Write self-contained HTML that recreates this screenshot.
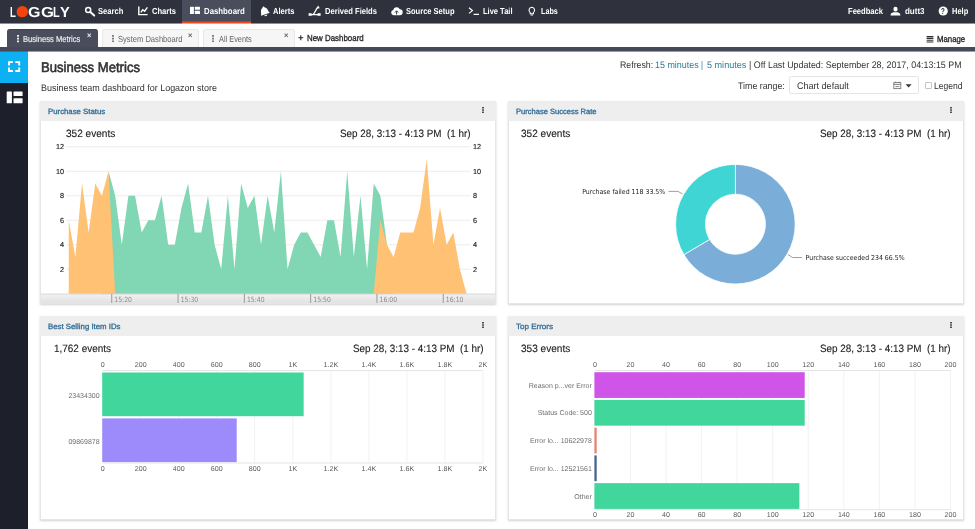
<!DOCTYPE html>
<html lang="en">
<head>
<meta charset="utf-8">
<title>Loggly - Business Metrics Dashboard</title>
<style>
*{box-sizing:border-box;margin:0;padding:0}
html,body{width:975px;height:529px;overflow:hidden;background:#fff}
body{position:relative;font-family:"Liberation Sans","DejaVu Sans",sans-serif;color:#333}
.abs{position:absolute}
#nav{position:absolute;left:0;top:0;width:975px;height:24px;background:linear-gradient(to bottom,#2f323d 0,#2f323d 23px,#8e9096 23px,#8e9096 24px)}
#nav .active{position:absolute;left:182px;top:0;width:69px;height:24px;background:#4a4e5c}
#nav .active i{position:absolute;left:0;bottom:0;width:100%;height:3px;background:linear-gradient(to bottom,#9c4c3d 0,#9c4c3d 1px,#ee4a1e 1px,#ee4a1e 2px,#f6a08a 2px,#f6a08a 3px)}
#tabs{position:absolute;left:0;top:24px;width:975px;height:28px;z-index:2}
#tabs .bar{position:absolute;left:0;top:23px;width:975px;height:5px;z-index:3;background:linear-gradient(to bottom,#464a58 0,#464a58 4px,rgba(70,74,88,.55) 4px,rgba(70,74,88,.55) 5px)}
.tab{position:absolute;top:5px;height:19px;border-radius:3px 3px 0 0}
.tab.on{background:#4a4e5c;border-top:1px solid #3d404d}
.tab.off{top:5px;background:#f6f6f6;border:1px solid #e8e8e8;border-bottom:none;height:18px}
#side{position:absolute;left:0;top:51px;width:28px;height:478px;background:#1d1f2b}
#side .blue{position:absolute;left:0;top:0;width:28px;height:32px;background:#0eb0f4}
.panel{position:absolute;width:456px;background:#fff;border:1px solid #e6e6e6;box-shadow:0 1px 2px rgba(0,0,0,.18)}
.panel .hd{position:absolute;left:-1px;top:-1px;right:-1px;height:20px;background:#eeeeee}
#app{position:absolute;left:0;top:0;width:975px;height:529px;will-change:transform;text-rendering:geometricPrecision}
svg{position:absolute;left:0;top:0;overflow:visible}
svg text{font-family:"DejaVu Sans","Liberation Sans",sans-serif}
</style>
</head>
<body>
<div id="app">

<div id="nav">
<div class="active"><i></i></div>
<svg width="975" height="24" viewBox="0 0 975 24">
<circle cx="22.4" cy="11.5" r="5.5" fill="#f4440f"/>
<g fill="none" stroke="#fff"><circle cx="88.2" cy="10" r="2.5" stroke-width="1.5"/><path d="M90.3 12.1 L94.2 15.6" stroke-width="2" stroke-linecap="round"/></g>
<path d="M138.8 6.6 V14.6 H147.6 M140.8 12.4 L142.8 9.8 L144.6 11.2 L147.4 7.4" fill="none" stroke="#fff" stroke-width="1.4"/>
<g fill="#fff"><rect x="190" y="6.8" width="3.9" height="7.3" rx=".5"/><rect x="194.8" y="6.8" width="5.2" height="3" rx=".5"/><rect x="194.8" y="10.8" width="5.2" height="3.3" rx=".5"/></g>
<g transform="rotate(-18 264.4 11) translate(264.4 11) scale(1.12) translate(-264.4 -11)"><path d="M260.2 14 C261.4 12.8 260.6 9 263.6 8 C264 6.6 265.4 6.7 265.6 8.1 C268.2 9.2 267.2 12.4 268.6 14 Z M263 14.8 H265.8 C265.6 16.2 263.2 16.2 263 14.8 Z" fill="#fff"/></g>
<g fill="#fff"><rect x="308.6" y="13.2" width="3" height="2.6"/><rect x="317.6" y="13.2" width="3" height="2.6"/><path d="M316.2 8.6 L318.2 5.4 L319.8 8.2 Z"/><path d="M311 14.6 H318 M313 14.2 C315.4 13.4 315.2 9.6 317.8 7.4" fill="none" stroke="#fff" stroke-width="1.3"/></g>
<path d="M393.6 15.2 A2.7 2.7 0 0 1 393.2 9.9 A3.5 3.5 0 0 1 399.8 9.2 A3 3 0 0 1 399.6 15.2 Z" fill="#fff"/><path d="M396.6 14.4 V11.2 M395 12.4 L396.6 10.8 L398.2 12.4" fill="none" stroke="#2e313c" stroke-width="1"/>
<path d="M469 7.8 L472.4 10.6 L469 13.4 M473.6 14.4 H479" fill="none" stroke="#fff" stroke-width="1.2"/>
<path d="M531.8 7.2 A3 3 0 0 1 533.4 12.6 V13.8 H530.2 V12.6 A3 3 0 0 1 531.8 7.2 Z" fill="none" stroke="#fff" stroke-width="1.1"/><path d="M530.6 15 H533" stroke="#fff" stroke-width="1"/>
<path d="M895.5 6.8 A2.1 2.4 0 0 1 895.5 11.6 A2.1 2.4 0 0 1 895.5 6.8 Z M890.6 15.6 C890.6 12.4 893 12.2 895.5 12.2 C898 12.2 900.4 12.4 900.4 15.6 Z" fill="#fff"/>
<circle cx="943.2" cy="11" r="4.6" fill="#fff"/>
</svg>
<span style="position:absolute;white-space:pre;line-height:1;font-size:14.4px;font-weight:700;color:#fff;font-family:'Liberation Sans','DejaVu Sans',sans-serif;left:9.76px;top:6.00px;transform-origin:0 0;transform:translateY(0.30px) scaleX(0.6630);">L</span>
<span style="position:absolute;white-space:pre;line-height:1;font-size:14.4px;font-weight:700;color:#f4440f;font-family:'Liberation Sans','DejaVu Sans',sans-serif;left:16.36px;top:6.00px;transform-origin:0 0;transform:translateY(0.30px) scaleX(1.0891);">O</span>
<span style="position:absolute;white-space:pre;line-height:1;font-size:14.4px;font-weight:700;color:#fff;font-family:'Liberation Sans','DejaVu Sans',sans-serif;left:28.34px;top:6.00px;transform-origin:0 0;transform:translateY(0.30px) scaleX(1.1112);">G</span>
<span style="position:absolute;white-space:pre;line-height:1;font-size:14.4px;font-weight:700;color:#fff;font-family:'Liberation Sans','DejaVu Sans',sans-serif;left:40.72px;top:6.00px;transform-origin:0 0;transform:translateY(0.30px) scaleX(1.1523);">G</span>
<span style="position:absolute;white-space:pre;line-height:1;font-size:14.4px;font-weight:700;color:#fff;font-family:'Liberation Sans','DejaVu Sans',sans-serif;left:53.17px;top:6.00px;transform-origin:0 0;transform:translateY(0.30px) scaleX(0.7577);">L</span>
<span style="position:absolute;white-space:pre;line-height:1;font-size:14.4px;font-weight:700;color:#fff;font-family:'Liberation Sans','DejaVu Sans',sans-serif;left:59.65px;top:6.00px;transform-origin:0 0;transform:translateY(0.30px) scaleX(1.0185);">Y</span>
<span style="position:absolute;white-space:pre;line-height:1;font-size:8.7px;font-weight:700;color:#fff;font-family:'Liberation Sans','DejaVu Sans',sans-serif;left:98.30px;top:7.00px;transform-origin:0 0;transform:translateY(0.10px) scaleX(0.8763);">Search</span>
<span style="position:absolute;white-space:pre;line-height:1;font-size:8.7px;font-weight:700;color:#fff;font-family:'Liberation Sans','DejaVu Sans',sans-serif;left:151.80px;top:7.00px;transform-origin:0 0;transform:translateY(0.10px) scaleX(0.8717);">Charts</span>
<span style="position:absolute;white-space:pre;line-height:1;font-size:8.7px;font-weight:700;color:#fff;font-family:'Liberation Sans','DejaVu Sans',sans-serif;left:204.00px;top:7.00px;transform-origin:0 0;transform:translateY(0.10px) scaleX(0.8989);">Dashboard</span>
<span style="position:absolute;white-space:pre;line-height:1;font-size:8.7px;font-weight:700;color:#fff;font-family:'Liberation Sans','DejaVu Sans',sans-serif;left:272.70px;top:7.00px;transform-origin:0 0;transform:translateY(0.10px) scaleX(0.8690);">Alerts</span>
<span style="position:absolute;white-space:pre;line-height:1;font-size:8.7px;font-weight:700;color:#fff;font-family:'Liberation Sans','DejaVu Sans',sans-serif;left:324.50px;top:7.00px;transform-origin:0 0;transform:translateY(0.10px) scaleX(0.8756);">Derived Fields</span>
<span style="position:absolute;white-space:pre;line-height:1;font-size:8.7px;font-weight:700;color:#fff;font-family:'Liberation Sans','DejaVu Sans',sans-serif;left:406.00px;top:7.00px;transform-origin:0 0;transform:translateY(0.10px) scaleX(0.8661);">Source Setup</span>
<span style="position:absolute;white-space:pre;line-height:1;font-size:8.7px;font-weight:700;color:#fff;font-family:'Liberation Sans','DejaVu Sans',sans-serif;left:482.70px;top:7.00px;transform-origin:0 0;transform:translateY(0.10px) scaleX(0.8645);">Live Tail</span>
<span style="position:absolute;white-space:pre;line-height:1;font-size:8.7px;font-weight:700;color:#fff;font-family:'Liberation Sans','DejaVu Sans',sans-serif;left:540.50px;top:7.00px;transform-origin:0 0;transform:translateY(0.10px) scaleX(0.8284);">Labs</span>
<span style="position:absolute;white-space:pre;line-height:1;font-size:8.7px;font-weight:700;color:#fff;font-family:'Liberation Sans','DejaVu Sans',sans-serif;left:847.70px;top:7.00px;transform-origin:0 0;transform:translateY(0.10px) scaleX(0.8733);">Feedback</span>
<span style="position:absolute;white-space:pre;line-height:1;font-size:8.7px;font-weight:700;color:#fff;font-family:'Liberation Sans','DejaVu Sans',sans-serif;left:904.70px;top:7.00px;transform-origin:0 0;transform:translateY(0.10px) scaleX(0.9183);">dutt3</span>
<span style="position:absolute;white-space:pre;line-height:1;font-size:8.5px;font-weight:700;color:#2e313c;font-family:'Liberation Sans','DejaVu Sans',sans-serif;left:941.40px;top:7.00px;transform-origin:0 0;transform:translateY(0.40px) scaleX(0.7303);">?</span>
<span style="position:absolute;white-space:pre;line-height:1;font-size:8.7px;font-weight:700;color:#fff;font-family:'Liberation Sans','DejaVu Sans',sans-serif;left:952.20px;top:7.00px;transform-origin:0 0;transform:translateY(0.10px) scaleX(0.8657);">Help</span>
</div>
<div id="tabs">
<div class="bar"></div>
<div class="tab on" style="left:7px;width:91px"></div>
<div class="tab off" style="left:102px;width:97px"></div>
<div class="tab off" style="left:203px;width:92px"></div>
<svg style="left:15.80px;top:11.00px" width="4" height="7.70"><path d="M2 0 V7.20" stroke="#fff" stroke-width="1.80" stroke-dasharray="1.80 0.90" fill="none"/></svg>
<span style="position:absolute;white-space:pre;line-height:1;font-size:8.8px;font-weight:400;color:#f2f2f2;font-family:'Liberation Sans','DejaVu Sans',sans-serif;left:22.60px;top:11.00px;transform-origin:0 0;transform:translateY(0.20px) scaleX(0.8634);-webkit-text-stroke:0.15px #f2f2f2;">Business Metrics</span>
<span style="position:absolute;white-space:pre;line-height:1;font-size:8px;font-weight:700;color:#f0f0f0;font-family:'Liberation Sans','DejaVu Sans',sans-serif;left:87.30px;top:7.00px;transform-origin:0 0;transform:translateY(0.90px) scaleX(0.9418);">×</span>
<svg style="left:110.90px;top:11.05px" width="4" height="7.60"><path d="M2 0 V7.10" stroke="#666" stroke-width="1.70" stroke-dasharray="1.70 1.00" fill="none"/></svg>
<span style="position:absolute;white-space:pre;line-height:1;font-size:8.8px;font-weight:400;color:#666;font-family:'Liberation Sans','DejaVu Sans',sans-serif;left:118.00px;top:11.00px;transform-origin:0 0;transform:translateY(0.20px) scaleX(0.8622);">System Dashboard</span>
<span style="position:absolute;white-space:pre;line-height:1;font-size:8px;font-weight:700;color:#666;font-family:'Liberation Sans','DejaVu Sans',sans-serif;left:188.20px;top:7.00px;transform-origin:0 0;transform:translateY(0.90px) scaleX(0.9418);">×</span>
<svg style="left:211.30px;top:11.05px" width="4" height="7.60"><path d="M2 0 V7.10" stroke="#666" stroke-width="1.70" stroke-dasharray="1.70 1.00" fill="none"/></svg>
<span style="position:absolute;white-space:pre;line-height:1;font-size:8.8px;font-weight:400;color:#666;font-family:'Liberation Sans','DejaVu Sans',sans-serif;left:218.70px;top:11.00px;transform-origin:0 0;transform:translateY(0.20px) scaleX(0.8383);">All Events</span>
<span style="position:absolute;white-space:pre;line-height:1;font-size:8px;font-weight:700;color:#666;font-family:'Liberation Sans','DejaVu Sans',sans-serif;left:284.00px;top:7.00px;transform-origin:0 0;transform:translateY(0.90px) scaleX(0.9418);">×</span>
<span style="position:absolute;white-space:pre;line-height:1;font-size:10px;font-weight:700;color:#222;font-family:'Liberation Sans','DejaVu Sans',sans-serif;left:298.20px;top:10.00px;transform-origin:0 0;transform:translateY(0.40px) scaleX(0.9583);">+</span>
<span style="position:absolute;white-space:pre;line-height:1;font-size:8.8px;font-weight:400;color:#222;font-family:'Liberation Sans','DejaVu Sans',sans-serif;left:306.80px;top:10.00px;transform-origin:0 0;transform:translateY(0.40px) scaleX(0.8989);-webkit-text-stroke:0.3px #222;">New Dashboard</span>
<svg width="975" height="28" viewBox="0 24 975 28"><path d="M926.6 36.6 H933.4 M926.6 38.4 H933.4 M926.6 40.2 H933.4 M926.6 42 H933.4" stroke="#333" stroke-width="1.1"/></svg>
<span style="position:absolute;white-space:pre;line-height:1;font-size:8.8px;font-weight:400;color:#222;font-family:'Liberation Sans','DejaVu Sans',sans-serif;left:936.50px;top:11.00px;transform-origin:0 0;transform:translateY(0.10px) scaleX(0.8869);-webkit-text-stroke:0.3px #222;">Manage</span>
</div>
<div id="side"><div class="blue"></div>
<svg width="28" height="60" viewBox="0 51 28 60">
<path d="M9 65.6 V62.1 H12.9 M15.3 62.1 H19.2 V65.6 M19.2 67.6 V71 H15.3 M12.9 71 H9 V67.6" fill="none" stroke="#fff" stroke-width="1.9"/>
<g fill="#fff"><rect x="6.7" y="91.4" width="5.2" height="11.9" rx=".6"/><rect x="13.5" y="91.4" width="9.1" height="4.6" rx=".6"/><rect x="13.5" y="98.2" width="9.1" height="5.1" rx=".6"/></g>
</svg></div>
<div id="head">
<span style="position:absolute;white-space:pre;line-height:1;font-size:14px;font-weight:400;color:#333;font-family:'Liberation Sans','DejaVu Sans',sans-serif;left:41.20px;top:60.00px;transform-origin:0 0;transform:scaleX(0.9356);-webkit-text-stroke:0.6px #333;">Business Metrics</span>
<span style="position:absolute;white-space:pre;line-height:1;font-size:9.5px;font-weight:400;color:#333;font-family:'Liberation Sans','DejaVu Sans',sans-serif;left:41.20px;top:84.00px;transform-origin:0 0;transform:translateY(0.20px) scaleX(0.9441);">Business team dashboard for Logazon store</span>
<span style="position:absolute;white-space:pre;line-height:1;font-size:9.5px;font-weight:400;color:#333;font-family:'Liberation Sans','DejaVu Sans',sans-serif;left:620.10px;top:60.00px;transform-origin:0 0;transform:translateY(0.60px) scaleX(0.9246);">Refresh:</span>
<span style="position:absolute;white-space:pre;line-height:1;font-size:9.5px;font-weight:400;color:#2f7b96;font-family:'Liberation Sans','DejaVu Sans',sans-serif;left:655.00px;top:60.00px;transform-origin:0 0;transform:translateY(0.60px) scaleX(0.9401);">15 minutes</span>
<span style="position:absolute;white-space:pre;line-height:1;font-size:9.5px;font-weight:400;color:#2f7b96;font-family:'Liberation Sans','DejaVu Sans',sans-serif;left:701.40px;top:60.00px;transform-origin:0 0;transform:translateY(0.60px) scaleX(0.8101);">|</span>
<span style="position:absolute;white-space:pre;line-height:1;font-size:9.5px;font-weight:400;color:#2f7b96;font-family:'Liberation Sans','DejaVu Sans',sans-serif;left:706.60px;top:60.00px;transform-origin:0 0;transform:translateY(0.60px) scaleX(0.9542);">5 minutes</span>
<span style="position:absolute;white-space:pre;line-height:1;font-size:9.5px;font-weight:400;color:#333;font-family:'Liberation Sans','DejaVu Sans',sans-serif;left:748.60px;top:60.00px;transform-origin:0 0;transform:translateY(0.60px) scaleX(0.9354);">| Off Last Updated: September 28, 2017, 04:13:15 PM</span>
<span style="position:absolute;white-space:pre;line-height:1;font-size:9.5px;font-weight:400;color:#333;font-family:'Liberation Sans','DejaVu Sans',sans-serif;left:738.40px;top:81.00px;transform-origin:0 0;transform:translateY(0.60px) scaleX(0.9296);">Time range:</span>
<div class="abs" style="left:789px;top:76px;width:129.5px;height:18px;border:1px solid #e4e4e4;border-radius:2px;background:#fff"></div>
<span style="position:absolute;white-space:pre;line-height:1;font-size:9.5px;font-weight:400;color:#333;font-family:'Liberation Sans','DejaVu Sans',sans-serif;left:797.20px;top:81.00px;transform-origin:0 0;transform:translateY(0.60px) scaleX(0.9503);">Chart default</span>
<svg width="975" height="100" viewBox="0 0 975 100"><g><rect x="893.8" y="82.6" width="7" height="6" fill="none" stroke="#777" stroke-width=".9"/><path d="M893.8 84.4 H900.8 M895.6 81.6 V83 M899 81.6 V83 M895.4 86.6 H899.4" stroke="#777" stroke-width=".9" fill="none"/><path d="M905.6 84.2 H911.6 L908.6 87.6 Z" fill="#333"/></g></svg>
<div class="abs" style="left:925.2px;top:82.4px;width:6.4px;height:6.4px;border:1px solid #c4c4c4;border-radius:1px;background:#fff"></div>
<span style="position:absolute;white-space:pre;line-height:1;font-size:9.5px;font-weight:400;color:#333;font-family:'Liberation Sans','DejaVu Sans',sans-serif;left:934.20px;top:81.00px;transform-origin:0 0;transform:translateY(0.60px) scaleX(0.8990);">Legend</span>
</div>
<div id="grid">
<div class="panel" id="p1" style="left:40px;top:101px;height:203px">
<div class="hd"></div>
<svg width="456" height="203" viewBox="0 0 456 203">
<path d="M25.30 167.25 H429.70" stroke="#ececec" stroke-width="1"/>
<path d="M25.30 142.75 H429.70" stroke="#ececec" stroke-width="1"/>
<path d="M25.30 118.25 H429.70" stroke="#ececec" stroke-width="1"/>
<path d="M25.30 93.75 H429.70" stroke="#ececec" stroke-width="1"/>
<path d="M25.30 69.25 H429.70" stroke="#ececec" stroke-width="1"/>
<path d="M25.30 44.75 H429.70" stroke="#ececec" stroke-width="1"/>
<defs><linearGradient id="ag" x1="0" y1="0" x2="0" y2="1"><stop offset="0" stop-color="#f1f1f1"/><stop offset="1" stop-color="#e2e2e2"/></linearGradient></defs>
<rect x="0" y="192" width="454" height="9.2" fill="url(#ag)"/>
<path d="M0 192 H454" stroke="#d8d8d8" stroke-width="1"/>
<path d="M60.90 191.75 L60.90 191.75 L67.53 69.25 L74.16 93.75 L80.79 142.75 L87.42 93.75 L94.05 93.75 L100.68 130.50 L107.31 118.25 L113.94 118.25 L120.57 93.75 L127.20 142.75 L133.83 142.75 L140.46 106.00 L147.09 81.50 L153.72 130.50 L160.35 130.50 L166.98 93.75 L173.61 142.75 L180.24 167.25 L186.87 93.75 L193.50 167.25 L200.13 81.50 L206.76 106.00 L213.39 93.75 L220.02 142.75 L226.65 93.75 L233.28 130.50 L239.91 69.25 L246.54 167.25 L253.17 142.75 L259.80 130.50 L266.43 130.50 L273.06 142.75 L279.69 155.00 L286.32 118.25 L292.95 118.25 L299.58 155.00 L306.21 69.25 L312.84 155.00 L319.47 93.75 L326.10 167.25 L332.73 81.50 L339.36 93.75 L345.99 142.75 L352.62 191.75 L352.62 191.75 Z" fill="#81d6b3"/>
<path d="M27.75 191.75 L27.75 118.25 L34.38 155.00 L41.01 81.50 L47.64 130.50 L54.27 81.50 L60.90 93.75 L67.53 69.25 L74.16 191.75 Z" fill="#ffc174"/>
<path d="M332.73 191.75 L332.73 191.75 L339.36 118.25 L345.99 142.75 L352.62 155.00 L359.25 130.50 L365.88 130.50 L372.51 130.50 L379.14 106.00 L385.77 57.00 L392.40 142.75 L399.03 106.00 L405.66 142.75 L412.29 130.50 L418.92 167.25 L425.55 191.75 Z" fill="#ffc174"/>
<path d="M70.75 192 V201" stroke="#9a9a9a" stroke-width="1"/>
<text x="73.35" y="199.5" font-size="7.2" fill="#8a8a8a" textLength="17.6" lengthAdjust="spacingAndGlyphs">15:20</text>
<path d="M137.05 192 V201" stroke="#9a9a9a" stroke-width="1"/>
<text x="139.65" y="199.5" font-size="7.2" fill="#8a8a8a" textLength="17.6" lengthAdjust="spacingAndGlyphs">15:30</text>
<path d="M203.35 192 V201" stroke="#9a9a9a" stroke-width="1"/>
<text x="205.95" y="199.5" font-size="7.2" fill="#8a8a8a" textLength="17.6" lengthAdjust="spacingAndGlyphs">15:40</text>
<path d="M269.65 192 V201" stroke="#9a9a9a" stroke-width="1"/>
<text x="272.25" y="199.5" font-size="7.2" fill="#8a8a8a" textLength="17.6" lengthAdjust="spacingAndGlyphs">15:50</text>
<path d="M335.95 192 V201" stroke="#9a9a9a" stroke-width="1"/>
<text x="338.55" y="199.5" font-size="7.2" fill="#8a8a8a" textLength="17.6" lengthAdjust="spacingAndGlyphs">16:00</text>
<path d="M402.25 192 V201" stroke="#9a9a9a" stroke-width="1"/>
<text x="404.85" y="199.5" font-size="7.2" fill="#8a8a8a" textLength="17.6" lengthAdjust="spacingAndGlyphs">16:10</text>
<text x="23" y="169.85" font-size="7.3" fill="#222" stroke="#222" stroke-width=".15" text-anchor="end" style="font-family:'Liberation Sans',sans-serif">2</text>
<text x="431.9" y="169.85" font-size="7.3" fill="#222" stroke="#222" stroke-width=".15" style="font-family:'Liberation Sans',sans-serif">2</text>
<text x="23" y="145.35" font-size="7.3" fill="#222" stroke="#222" stroke-width=".15" text-anchor="end" style="font-family:'Liberation Sans',sans-serif">4</text>
<text x="431.9" y="145.35" font-size="7.3" fill="#222" stroke="#222" stroke-width=".15" style="font-family:'Liberation Sans',sans-serif">4</text>
<text x="23" y="120.85" font-size="7.3" fill="#222" stroke="#222" stroke-width=".15" text-anchor="end" style="font-family:'Liberation Sans',sans-serif">6</text>
<text x="431.9" y="120.85" font-size="7.3" fill="#222" stroke="#222" stroke-width=".15" style="font-family:'Liberation Sans',sans-serif">6</text>
<text x="23" y="96.35" font-size="7.3" fill="#222" stroke="#222" stroke-width=".15" text-anchor="end" style="font-family:'Liberation Sans',sans-serif">8</text>
<text x="431.9" y="96.35" font-size="7.3" fill="#222" stroke="#222" stroke-width=".15" style="font-family:'Liberation Sans',sans-serif">8</text>
<text x="23" y="71.85" font-size="7.3" fill="#222" stroke="#222" stroke-width=".15" text-anchor="end" style="font-family:'Liberation Sans',sans-serif">10</text>
<text x="431.9" y="71.85" font-size="7.3" fill="#222" stroke="#222" stroke-width=".15" style="font-family:'Liberation Sans',sans-serif">10</text>
<text x="23" y="47.35" font-size="7.3" fill="#222" stroke="#222" stroke-width=".15" text-anchor="end" style="font-family:'Liberation Sans',sans-serif">12</text>
<text x="431.9" y="47.35" font-size="7.3" fill="#222" stroke="#222" stroke-width=".15" style="font-family:'Liberation Sans',sans-serif">12</text>
</svg>
<span style="position:absolute;white-space:pre;line-height:1;font-size:7.7px;font-weight:400;color:#2f6b96;font-family:'Liberation Sans','DejaVu Sans',sans-serif;left:6.60px;top:5.00px;transform-origin:0 0;transform:translateY(0.60px) scaleX(1.0138);-webkit-text-stroke:0.3px #2f6b96;">Purchase Status</span>
<svg style="left:440.30px;top:5.30px" width="4" height="6.50"><path d="M2 0 V6.00" stroke="#2a2a2a" stroke-width="1.60" stroke-dasharray="1.60 0.60" fill="none"/></svg>
<span style="position:absolute;white-space:pre;line-height:1;font-size:10.6px;font-weight:400;color:#222;font-family:'Liberation Sans','DejaVu Sans',sans-serif;left:24.70px;top:26.00px;transform-origin:0 0;transform:translateY(0.50px) scaleX(0.9509);-webkit-text-stroke:0.12px #222;">352 events</span>
<span style="position:absolute;white-space:pre;line-height:1;font-size:10.6px;font-weight:400;color:#222;font-family:'Liberation Sans','DejaVu Sans',sans-serif;left:299.30px;top:26.00px;transform-origin:0 0;transform:translateY(0.60px) scaleX(0.9318);-webkit-text-stroke:0.12px #222;">Sep 28, 3:13 - 4:13 PM  (1 hr)</span>
</div>
<div class="panel" id="p2" style="left:508px;top:101px;height:203px">
<div class="hd"></div>
<svg width="456" height="203" viewBox="0 0 456 203">
<path d="M226.40 62.40 A59.8 59.8 0 1 1 174.93 152.64 L200.58 137.47 A30 30 0 1 0 226.40 92.20 Z" fill="#7aadd8" stroke="#fff" stroke-width="0.8"/>
<path d="M174.93 152.64 A59.8 59.8 0 0 1 226.40 62.40 L226.40 92.20 A30 30 0 0 0 200.58 137.47 Z" fill="#40d5d5" stroke="#fff" stroke-width="0.8"/>
<path d="M159.5 89.4 H169 L173.5 92" fill="none" stroke="#888" stroke-width=".8"/>
<path d="M279 152.5 L283.5 155.5 H293" fill="none" stroke="#888" stroke-width=".8"/>
<text x="73.20000000000005" y="92" font-size="6.8" fill="#222" textLength="83" lengthAdjust="spacingAndGlyphs">Purchase failed 118 33.5%</text>
<text x="296.6" y="158.10000000000002" font-size="6.8" fill="#222" textLength="99" lengthAdjust="spacingAndGlyphs">Purchase succeeded 234 66.5%</text>
</svg>
<span style="position:absolute;white-space:pre;line-height:1;font-size:7.7px;font-weight:400;color:#2f6b96;font-family:'Liberation Sans','DejaVu Sans',sans-serif;left:6.60px;top:5.00px;transform-origin:0 0;transform:translateY(0.60px) scaleX(0.9811);-webkit-text-stroke:0.3px #2f6b96;">Purchase Success Rate</span>
<svg style="left:440.30px;top:5.30px" width="4" height="6.50"><path d="M2 0 V6.00" stroke="#2a2a2a" stroke-width="1.60" stroke-dasharray="1.60 0.60" fill="none"/></svg>
<span style="position:absolute;white-space:pre;line-height:1;font-size:10.6px;font-weight:400;color:#222;font-family:'Liberation Sans','DejaVu Sans',sans-serif;left:12.00px;top:26.00px;transform-origin:0 0;transform:translateY(0.50px) scaleX(0.9509);-webkit-text-stroke:0.12px #222;">352 events</span>
<span style="position:absolute;white-space:pre;line-height:1;font-size:10.6px;font-weight:400;color:#222;font-family:'Liberation Sans','DejaVu Sans',sans-serif;left:311.40px;top:26.00px;transform-origin:0 0;transform:translateY(0.60px) scaleX(0.9318);-webkit-text-stroke:0.12px #222;">Sep 28, 3:13 - 4:13 PM  (1 hr)</span>
</div>
<div class="panel" id="p3" style="left:40px;top:316px;height:204px">
<div class="hd"></div>
<svg width="456" height="204" viewBox="0 0 456 204">
<path d="M99.72 53.60 V146.00" stroke="#f2f2f2" stroke-width="1"/>
<path d="M137.74 53.60 V146.00" stroke="#f2f2f2" stroke-width="1"/>
<path d="M175.76 53.60 V146.00" stroke="#f2f2f2" stroke-width="1"/>
<path d="M213.78 53.60 V146.00" stroke="#f2f2f2" stroke-width="1"/>
<path d="M251.80 53.60 V146.00" stroke="#f2f2f2" stroke-width="1"/>
<path d="M289.82 53.60 V146.00" stroke="#f2f2f2" stroke-width="1"/>
<path d="M327.84 53.60 V146.00" stroke="#f2f2f2" stroke-width="1"/>
<path d="M365.86 53.60 V146.00" stroke="#f2f2f2" stroke-width="1"/>
<path d="M403.88 53.60 V146.00" stroke="#f2f2f2" stroke-width="1"/>
<path d="M441.90 53.60 V146.00" stroke="#f2f2f2" stroke-width="1"/>
<path d="M61.70 53.60 H441.90 M61.70 146.00 H441.90" stroke="#e4e4e4" stroke-width="1" fill="none"/>
<rect x="61.20" y="55.50" width="201.44" height="43.70" fill="#41d69c"/>
<text x="58.60" y="80.75" font-size="7" fill="#6e6e6e" text-anchor="end" style="font-family:'Liberation Sans','DejaVu Sans',sans-serif">23434300</text>
<rect x="61.20" y="101.40" width="134.52" height="43.70" fill="#9d8bfb"/>
<text x="58.60" y="126.65" font-size="7" fill="#6e6e6e" text-anchor="end" style="font-family:'Liberation Sans','DejaVu Sans',sans-serif">09869878</text>
<text x="61.70" y="50.20" font-size="7.1" fill="#5a5a5a" text-anchor="middle" style="font-family:'Liberation Sans','DejaVu Sans',sans-serif">0</text>
<text x="61.70" y="153.70" font-size="7.1" fill="#5a5a5a" text-anchor="middle" style="font-family:'Liberation Sans','DejaVu Sans',sans-serif">0</text>
<text x="99.72" y="50.20" font-size="7.1" fill="#5a5a5a" text-anchor="middle" style="font-family:'Liberation Sans','DejaVu Sans',sans-serif">200</text>
<text x="99.72" y="153.70" font-size="7.1" fill="#5a5a5a" text-anchor="middle" style="font-family:'Liberation Sans','DejaVu Sans',sans-serif">200</text>
<text x="137.74" y="50.20" font-size="7.1" fill="#5a5a5a" text-anchor="middle" style="font-family:'Liberation Sans','DejaVu Sans',sans-serif">400</text>
<text x="137.74" y="153.70" font-size="7.1" fill="#5a5a5a" text-anchor="middle" style="font-family:'Liberation Sans','DejaVu Sans',sans-serif">400</text>
<text x="175.76" y="50.20" font-size="7.1" fill="#5a5a5a" text-anchor="middle" style="font-family:'Liberation Sans','DejaVu Sans',sans-serif">600</text>
<text x="175.76" y="153.70" font-size="7.1" fill="#5a5a5a" text-anchor="middle" style="font-family:'Liberation Sans','DejaVu Sans',sans-serif">600</text>
<text x="213.78" y="50.20" font-size="7.1" fill="#5a5a5a" text-anchor="middle" style="font-family:'Liberation Sans','DejaVu Sans',sans-serif">800</text>
<text x="213.78" y="153.70" font-size="7.1" fill="#5a5a5a" text-anchor="middle" style="font-family:'Liberation Sans','DejaVu Sans',sans-serif">800</text>
<text x="251.80" y="50.20" font-size="7.1" fill="#5a5a5a" text-anchor="middle" style="font-family:'Liberation Sans','DejaVu Sans',sans-serif">1K</text>
<text x="251.80" y="153.70" font-size="7.1" fill="#5a5a5a" text-anchor="middle" style="font-family:'Liberation Sans','DejaVu Sans',sans-serif">1K</text>
<text x="289.82" y="50.20" font-size="7.1" fill="#5a5a5a" text-anchor="middle" style="font-family:'Liberation Sans','DejaVu Sans',sans-serif">1.2K</text>
<text x="289.82" y="153.70" font-size="7.1" fill="#5a5a5a" text-anchor="middle" style="font-family:'Liberation Sans','DejaVu Sans',sans-serif">1.2K</text>
<text x="327.84" y="50.20" font-size="7.1" fill="#5a5a5a" text-anchor="middle" style="font-family:'Liberation Sans','DejaVu Sans',sans-serif">1.4K</text>
<text x="327.84" y="153.70" font-size="7.1" fill="#5a5a5a" text-anchor="middle" style="font-family:'Liberation Sans','DejaVu Sans',sans-serif">1.4K</text>
<text x="365.86" y="50.20" font-size="7.1" fill="#5a5a5a" text-anchor="middle" style="font-family:'Liberation Sans','DejaVu Sans',sans-serif">1.6K</text>
<text x="365.86" y="153.70" font-size="7.1" fill="#5a5a5a" text-anchor="middle" style="font-family:'Liberation Sans','DejaVu Sans',sans-serif">1.6K</text>
<text x="403.88" y="50.20" font-size="7.1" fill="#5a5a5a" text-anchor="middle" style="font-family:'Liberation Sans','DejaVu Sans',sans-serif">1.8K</text>
<text x="403.88" y="153.70" font-size="7.1" fill="#5a5a5a" text-anchor="middle" style="font-family:'Liberation Sans','DejaVu Sans',sans-serif">1.8K</text>
<text x="441.90" y="50.20" font-size="7.1" fill="#5a5a5a" text-anchor="middle" style="font-family:'Liberation Sans','DejaVu Sans',sans-serif">2K</text>
<text x="441.90" y="153.70" font-size="7.1" fill="#5a5a5a" text-anchor="middle" style="font-family:'Liberation Sans','DejaVu Sans',sans-serif">2K</text>
</svg>
<span style="position:absolute;white-space:pre;line-height:1;font-size:7.7px;font-weight:400;color:#2f6b96;font-family:'Liberation Sans','DejaVu Sans',sans-serif;left:6.60px;top:5.00px;transform-origin:0 0;transform:translateY(0.60px) scaleX(1.0160);-webkit-text-stroke:0.3px #2f6b96;">Best Selling Item IDs</span>
<svg style="left:440.30px;top:5.30px" width="4" height="6.50"><path d="M2 0 V6.00" stroke="#2a2a2a" stroke-width="1.60" stroke-dasharray="1.60 0.60" fill="none"/></svg>
<span style="position:absolute;white-space:pre;line-height:1;font-size:10.6px;font-weight:400;color:#222;font-family:'Liberation Sans','DejaVu Sans',sans-serif;left:12.70px;top:26.00px;transform-origin:0 0;transform:translateY(0.50px) scaleX(0.9395);-webkit-text-stroke:0.12px #222;">1,762 events</span>
<span style="position:absolute;white-space:pre;line-height:1;font-size:10.6px;font-weight:400;color:#222;font-family:'Liberation Sans','DejaVu Sans',sans-serif;left:311.70px;top:26.00px;transform-origin:0 0;transform:translateY(0.60px) scaleX(0.9318);-webkit-text-stroke:0.12px #222;">Sep 28, 3:13 - 4:13 PM  (1 hr)</span>
</div>
<div class="panel" id="p4" style="left:508px;top:316px;height:204px">
<div class="hd"></div>
<svg width="456" height="204" viewBox="0 0 456 204">
<path d="M121.46 53.50 V192.70" stroke="#f2f2f2" stroke-width="1"/>
<path d="M157.02 53.50 V192.70" stroke="#f2f2f2" stroke-width="1"/>
<path d="M192.58 53.50 V192.70" stroke="#f2f2f2" stroke-width="1"/>
<path d="M228.14 53.50 V192.70" stroke="#f2f2f2" stroke-width="1"/>
<path d="M263.70 53.50 V192.70" stroke="#f2f2f2" stroke-width="1"/>
<path d="M299.26 53.50 V192.70" stroke="#f2f2f2" stroke-width="1"/>
<path d="M334.82 53.50 V192.70" stroke="#f2f2f2" stroke-width="1"/>
<path d="M370.38 53.50 V192.70" stroke="#f2f2f2" stroke-width="1"/>
<path d="M405.94 53.50 V192.70" stroke="#f2f2f2" stroke-width="1"/>
<path d="M441.50 53.50 V192.70" stroke="#f2f2f2" stroke-width="1"/>
<path d="M85.90 53.50 H441.50 M85.90 192.70 H441.50" stroke="#e4e4e4" stroke-width="1" fill="none"/>
<rect x="85.40" y="55.20" width="210.30" height="25.74" fill="#cf55e8"/>
<text x="82.80" y="70.67" font-size="7" fill="#6e6e6e" text-anchor="end" style="font-family:'Liberation Sans','DejaVu Sans',sans-serif">Reason p...ver Error</text>
<rect x="85.40" y="82.94" width="210.30" height="25.74" fill="#41d69c"/>
<text x="82.80" y="98.41" font-size="7" fill="#6e6e6e" text-anchor="end" style="font-family:'Liberation Sans','DejaVu Sans',sans-serif">Status Code: 500</text>
<rect x="85.40" y="110.68" width="2.28" height="25.74" fill="#e28570"/>
<text x="82.80" y="126.15" font-size="7" fill="#6e6e6e" text-anchor="end" style="font-family:'Liberation Sans','DejaVu Sans',sans-serif">Error lo... 10622978</text>
<rect x="85.40" y="138.42" width="2.28" height="25.74" fill="#45638f"/>
<text x="82.80" y="153.89" font-size="7" fill="#6e6e6e" text-anchor="end" style="font-family:'Liberation Sans','DejaVu Sans',sans-serif">Error lo... 12521561</text>
<rect x="85.40" y="166.16" width="204.97" height="25.74" fill="#41d69c"/>
<text x="82.80" y="181.63" font-size="7" fill="#6e6e6e" text-anchor="end" style="font-family:'Liberation Sans','DejaVu Sans',sans-serif">Other</text>
<text x="85.90" y="50.10" font-size="7.1" fill="#5a5a5a" text-anchor="middle" style="font-family:'Liberation Sans','DejaVu Sans',sans-serif">0</text>
<text x="85.90" y="200.40" font-size="7.1" fill="#5a5a5a" text-anchor="middle" style="font-family:'Liberation Sans','DejaVu Sans',sans-serif">0</text>
<text x="121.46" y="50.10" font-size="7.1" fill="#5a5a5a" text-anchor="middle" style="font-family:'Liberation Sans','DejaVu Sans',sans-serif">20</text>
<text x="121.46" y="200.40" font-size="7.1" fill="#5a5a5a" text-anchor="middle" style="font-family:'Liberation Sans','DejaVu Sans',sans-serif">20</text>
<text x="157.02" y="50.10" font-size="7.1" fill="#5a5a5a" text-anchor="middle" style="font-family:'Liberation Sans','DejaVu Sans',sans-serif">40</text>
<text x="157.02" y="200.40" font-size="7.1" fill="#5a5a5a" text-anchor="middle" style="font-family:'Liberation Sans','DejaVu Sans',sans-serif">40</text>
<text x="192.58" y="50.10" font-size="7.1" fill="#5a5a5a" text-anchor="middle" style="font-family:'Liberation Sans','DejaVu Sans',sans-serif">60</text>
<text x="192.58" y="200.40" font-size="7.1" fill="#5a5a5a" text-anchor="middle" style="font-family:'Liberation Sans','DejaVu Sans',sans-serif">60</text>
<text x="228.14" y="50.10" font-size="7.1" fill="#5a5a5a" text-anchor="middle" style="font-family:'Liberation Sans','DejaVu Sans',sans-serif">80</text>
<text x="228.14" y="200.40" font-size="7.1" fill="#5a5a5a" text-anchor="middle" style="font-family:'Liberation Sans','DejaVu Sans',sans-serif">80</text>
<text x="263.70" y="50.10" font-size="7.1" fill="#5a5a5a" text-anchor="middle" style="font-family:'Liberation Sans','DejaVu Sans',sans-serif">100</text>
<text x="263.70" y="200.40" font-size="7.1" fill="#5a5a5a" text-anchor="middle" style="font-family:'Liberation Sans','DejaVu Sans',sans-serif">100</text>
<text x="299.26" y="50.10" font-size="7.1" fill="#5a5a5a" text-anchor="middle" style="font-family:'Liberation Sans','DejaVu Sans',sans-serif">120</text>
<text x="299.26" y="200.40" font-size="7.1" fill="#5a5a5a" text-anchor="middle" style="font-family:'Liberation Sans','DejaVu Sans',sans-serif">120</text>
<text x="334.82" y="50.10" font-size="7.1" fill="#5a5a5a" text-anchor="middle" style="font-family:'Liberation Sans','DejaVu Sans',sans-serif">140</text>
<text x="334.82" y="200.40" font-size="7.1" fill="#5a5a5a" text-anchor="middle" style="font-family:'Liberation Sans','DejaVu Sans',sans-serif">140</text>
<text x="370.38" y="50.10" font-size="7.1" fill="#5a5a5a" text-anchor="middle" style="font-family:'Liberation Sans','DejaVu Sans',sans-serif">160</text>
<text x="370.38" y="200.40" font-size="7.1" fill="#5a5a5a" text-anchor="middle" style="font-family:'Liberation Sans','DejaVu Sans',sans-serif">160</text>
<text x="405.94" y="50.10" font-size="7.1" fill="#5a5a5a" text-anchor="middle" style="font-family:'Liberation Sans','DejaVu Sans',sans-serif">180</text>
<text x="405.94" y="200.40" font-size="7.1" fill="#5a5a5a" text-anchor="middle" style="font-family:'Liberation Sans','DejaVu Sans',sans-serif">180</text>
<text x="441.50" y="50.10" font-size="7.1" fill="#5a5a5a" text-anchor="middle" style="font-family:'Liberation Sans','DejaVu Sans',sans-serif">200</text>
<text x="441.50" y="200.40" font-size="7.1" fill="#5a5a5a" text-anchor="middle" style="font-family:'Liberation Sans','DejaVu Sans',sans-serif">200</text>
</svg>
<span style="position:absolute;white-space:pre;line-height:1;font-size:7.7px;font-weight:400;color:#2f6b96;font-family:'Liberation Sans','DejaVu Sans',sans-serif;left:6.60px;top:5.00px;transform-origin:0 0;transform:translateY(0.60px) scaleX(1.0432);-webkit-text-stroke:0.3px #2f6b96;">Top Errors</span>
<svg style="left:440.30px;top:5.30px" width="4" height="6.50"><path d="M2 0 V6.00" stroke="#2a2a2a" stroke-width="1.60" stroke-dasharray="1.60 0.60" fill="none"/></svg>
<span style="position:absolute;white-space:pre;line-height:1;font-size:10.6px;font-weight:400;color:#222;font-family:'Liberation Sans','DejaVu Sans',sans-serif;left:12.00px;top:26.00px;transform-origin:0 0;transform:translateY(0.50px) scaleX(0.9509);-webkit-text-stroke:0.12px #222;">353 events</span>
<span style="position:absolute;white-space:pre;line-height:1;font-size:10.6px;font-weight:400;color:#222;font-family:'Liberation Sans','DejaVu Sans',sans-serif;left:311.40px;top:26.00px;transform-origin:0 0;transform:translateY(0.60px) scaleX(0.9318);-webkit-text-stroke:0.12px #222;">Sep 28, 3:13 - 4:13 PM  (1 hr)</span>
</div>
</div>
</div>
</body></html>
